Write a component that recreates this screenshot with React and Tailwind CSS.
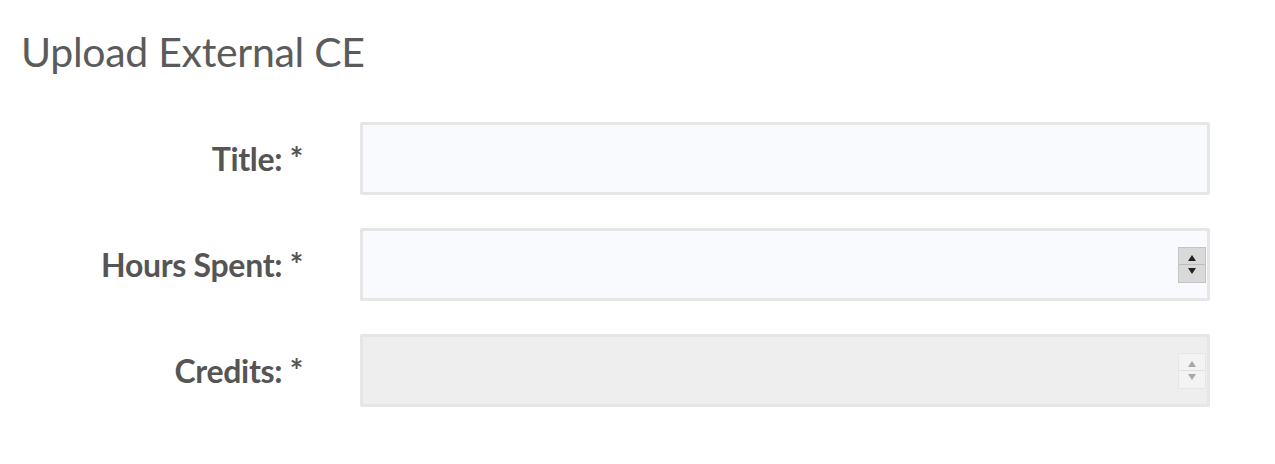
import React from "react";

const Spinner = ({ disabled }) => (
  <div
    className={`absolute right-[4px] top-1/2 -translate-y-1/2 flex h-[36px] w-[28px] flex-col items-center justify-center gap-[2px] border ${
      disabled ? "border-[#e6e6e6] bg-[#f3f3f3]" : "border-[#c4c4c4] bg-[#d9d9d9]"
    }`}
  >
    <svg width="10" height="8" viewBox="0 0 10 8">
      <path d="M5 1 L9 7 L1 7 Z" fill={disabled ? "#a8a8a8" : "#222"} />
    </svg>
    <div className={`h-[1px] w-full ${disabled ? "bg-[#e0e0e0]" : "bg-[#bdbdbd]"}`} />
    <svg width="10" height="8" viewBox="0 0 10 8">
      <path d="M1 1 L9 1 L5 7 Z" fill={disabled ? "#a8a8a8" : "#222"} />
    </svg>
  </div>
);

const Field = ({ label, type = "text", disabled }) => (
  <div className="flex items-center">
    <label className="w-[304px] pr-[1px] text-right text-[32px] font-bold tracking-[-0.3px] text-[#555555]">
      {label}
    </label>
    <div className="relative ml-[56px] w-[850px]">
      <input
        type="text"
        disabled={disabled}
        className={`block h-[73px] w-full rounded-[2px] border-[3px] border-[#e6e6e6] outline-none ${
          disabled ? "bg-[#eeeeee]" : "bg-[#f9fafd]"
        }`}
      />
      {type === "number" && <Spinner disabled={disabled} />}
    </div>
  </div>
);

export default function App() {
  return (
    <div
      className="min-h-[464px] w-[1275px] bg-white"
      style={{ fontFamily: "Lato, 'Open Sans', Arial, sans-serif" }}
    >
      <h1 className="pl-[21px] pt-[24px] text-[41px] font-normal leading-[56px] tracking-[-0.3px] text-[#5b5b5b]">
        Upload External CE
      </h1>
      <div className="mt-[42px] flex flex-col gap-[33px]">
        <Field label="Title: *" />
        <Field label="Hours Spent: *" type="number" />
        <Field label="Credits: *" type="number" disabled />
      </div>
    </div>
  );
}
